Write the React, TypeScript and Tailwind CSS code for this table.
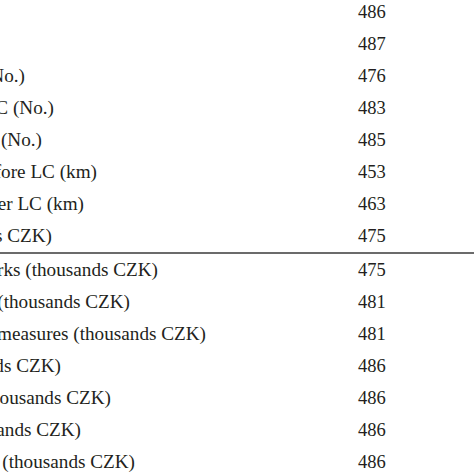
const rows: { label: string; box: string; value: string }[] = [
  { label: "", box: "w-[0px]", value: "486" },
  { label: "", box: "w-[0px]", value: "487" },
  { label: "accidents (No.)", box: "w-[25px]", value: "476" },
  { label: "accidents at LC (No.)", box: "w-[54px]", value: "483" },
  { label: "(No.)", box: "w-[42px]", value: "485" },
  { label: "distance before LC (km)", box: "w-[97px]", value: "453" },
  { label: "distance after LC (km)", box: "w-[84px]", value: "463" },
  { label: "costs (thousands CZK)", box: "w-[52px]", value: "475" },
];

const rows2: { label: string; box: string; value: string }[] = [
  { label: "construction works (thousands CZK)", box: "w-[158px]", value: "475" },
  { label: "costs of signals (thousands CZK)", box: "w-[130px]", value: "481" },
  { label: "measures (thousands CZK)", box: "w-[206px]", value: "481" },
  { label: "total (thousands CZK)", box: "w-[61px]", value: "486" },
  { label: "operation (thousands CZK)", box: "w-[111px]", value: "486" },
  { label: "repairs (thousands CZK)", box: "w-[81px]", value: "486" },
  { label: "(thousands CZK)", box: "w-[135px]", value: "486" },
];

const Row = ({ label, box, value }: { label: string; box: string; value: string }) => (
  <div className="flex h-[32px] items-center">
    <div className="w-[358px] shrink-0 text-[19.2px]">
      <div className={`${box} flex justify-end overflow-hidden whitespace-nowrap`}>
        <span>{label}</span>
      </div>
    </div>
    <div>{value}</div>
  </div>
);

export default function App() {
  return (
    <div
      className="h-[474px] w-[474px] overflow-hidden bg-white text-[18.5px] leading-none text-[#231f20]"
      style={{ fontFamily: '"Liberation Serif", "DejaVu Serif", serif' }}
    >
      <div className="-mt-[4px]">
        {rows.map((r, i) => (
          <Row key={i} {...r} />
        ))}
        {/* group divider */}
        <div className="h-[2px] w-full bg-[#6b6b6b]" />
        {rows2.map((r, i) => (
          <Row key={i} {...r} />
        ))}
      </div>
    </div>
  );
}
